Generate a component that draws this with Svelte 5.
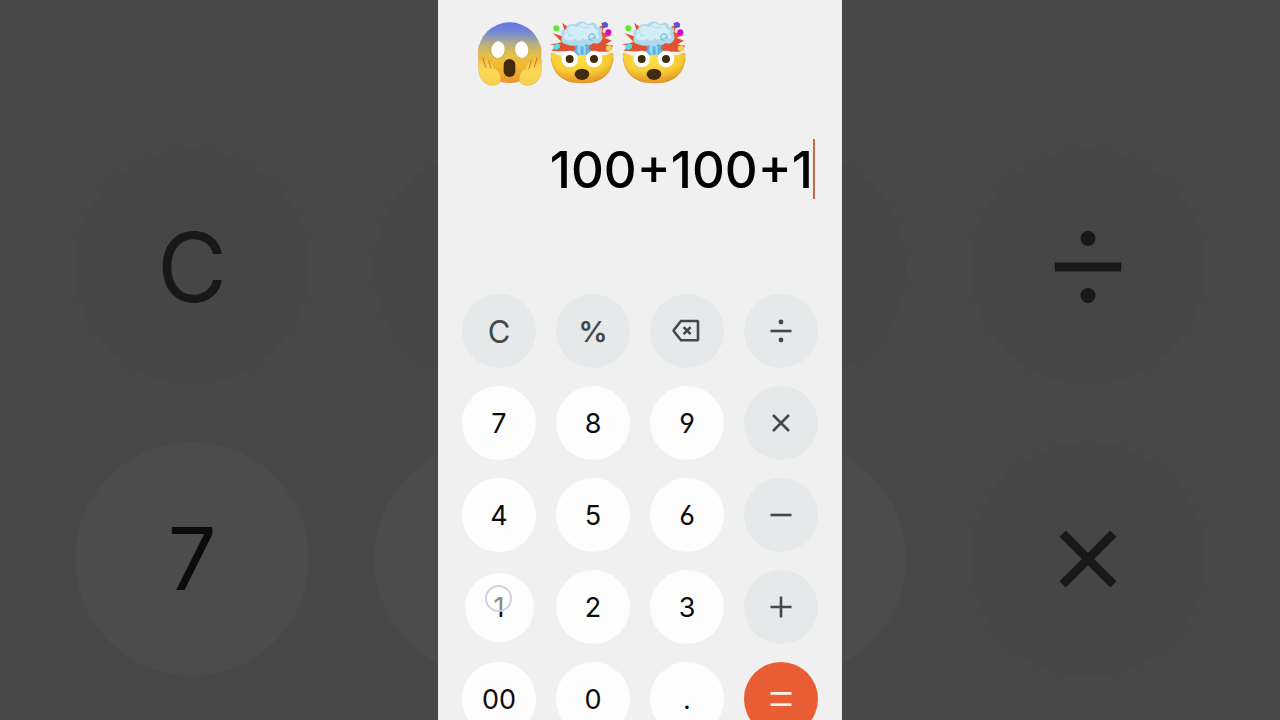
<script>
  // Calculator screen over an enlarged, dimmed copy of its own keypad
  let expression = '100+100+1';
  let pressed = '1';

  const keys = [
    { value: 'C', type: 'op', label: 'Clear' },
    { value: '%', type: 'op', label: 'Percent' },
    { value: 'back', type: 'op', icon: true, label: 'Backspace' },
    { value: '÷', type: 'op', icon: true, label: 'Divide' },
    { value: '7' },
    { value: '8' },
    { value: '9' },
    { value: '×', type: 'op', icon: true, label: 'Multiply' },
    { value: '4' },
    { value: '5' },
    { value: '6' },
    { value: '−', type: 'op', icon: true, label: 'Subtract' },
    { value: '1' },
    { value: '2' },
    { value: '3' },
    { value: '+', type: 'op', icon: true, label: 'Add' },
    { value: '00' },
    { value: '0' },
    { value: '.' },
    { value: '=', type: 'equals', icon: true, label: 'Equals' }
  ];

  // only the outer columns of the backdrop carry a symbol
  const backdropKeys = [
    { value: 'C', type: 'op' },
    { type: 'op' },
    { type: 'op' },
    { value: '÷', type: 'op', icon: true },
    { value: '7' },
    {},
    {},
    { value: '×', type: 'op', icon: true }
  ];

  // work through × ÷ % first, then add everything up
  function calculate(text) {
    const terms = text.replace(/−/g, '+-').split('+').filter(Boolean);
    const total = terms.reduce((sum, term) => {
      const parts = term.split(/([×÷%])/);
      let value = Number(parts[0]);
      for (let i = 1; i < parts.length; i += 2) {
        if (parts[i] === '%') value = value / 100;
        else if (parts[i] === '×') value = value * Number(parts[i + 1]);
        else value = value / Number(parts[i + 1]);
      }
      return sum + value;
    }, 0);
    return String(total);
  }

  function press(key) {
    pressed = key.value;
    if (key.value === 'C') expression = '';
    else if (key.value === 'back') expression = expression.slice(0, -1);
    else if (key.value === '=') expression = calculate(expression);
    else expression += key.value;
  }
</script>

{#snippet icon(name)}
  {#if name === 'back'}
    <svg class="icon wide" viewBox="0 0 30 24" aria-hidden="true">
      <path d="M9 2H25.2Q26 2 26 2.8V20.4Q26 21.2 25.2 21.2H9L1.9 12.2Q1.5 11.6 1.9 11Z" />
      <path d="M11.6 8.2L18.6 15.2M18.6 8.2L11.6 15.2" />
    </svg>
  {:else}
    <svg class="icon" viewBox="0 0 24 24" aria-hidden="true">
      {#if name === '÷'}
        <path d="M1.5 12H22.5" />
        <circle cx="12" cy="3" r="2.4" />
        <circle cx="12" cy="21" r="2.4" />
      {:else if name === '×'}
        <path d="M4 4L20 20M20 4L4 20" />
      {:else if name === '−'}
        <path d="M1.5 12H22.5" />
      {:else if name === '+'}
        <path d="M1.5 12H22.5M12 1.5V22.5" />
      {:else}
        <path d="M1.5 6.4H22.5M1.5 17.6H22.5" />
      {/if}
    </svg>
  {/if}
{/snippet}

{#snippet exploding()}
  <svg class="emoji" viewBox="3 9 216 216" role="img" aria-label="Exploding head">
    <path fill="#df5231" d="M46 109L19 107L37 92L15 89L50 81L24 55L56 65L58 45L52 24L78 42L150 42L180 27L172 52L202 60L178 68L201 77L181 88L205 92L190 110Z" />
    <path fill="#5fb2df" d="M87 88H135L132 101L145 111Q113 132 80 111L92 102Z" />
    <path fill="#9cd5ed" d="M98 89H107V121Q101 118 97 110ZM115 92H122V120L116 122Z" />
    <path fill="#add9ea" d="M61 87Q43 82 51 65Q40 42 63 42Q67 23 91 28Q108 10 130 27Q151 16 157 36Q177 34 169 54Q176 70 169 78Q161 91 145 84Q137 95 125 87Q108 101 96 90Q80 96 61 87Z" />
    <path fill="#d3edf6" d="M59 72Q49 63 62 58Q52 48 66 46Q69 30 87 33Q94 38 100 34Q109 16 126 31Q146 24 149 42Q166 43 159 57Q167 66 157 73Q151 59 139 66Q128 76 114 71Q99 82 91 72Q73 83 59 72Z" />
    <path class="swirl" d="M142 76Q129 76 132 63Q138 52 149 60Q154 68 146 70" />
    <path class="swirl faint" d="M68 47Q66 61 80 62M105 32Q115 43 131 36M92 77Q83 82 74 77" />
    <path fill="url(#bowl)" d="M17 116Q19 109 34 118Q44 126 56 120L76 111L92 120H131L144 110L163 117Q178 125 190 117Q202 110 206 116Q205 205 112 205Q19 205 17 116Z" />
    <path fill="none" stroke="#d98b22" stroke-width="3" stroke-opacity=".5" d="M18 130Q30 203 112 203Q195 203 204 130" />
    <circle cx="74" cy="132" r="25" fill="#fff" />
    <circle cx="147" cy="132" r="25" fill="#fff" />
    <circle cx="74" cy="132" r="12" fill="#422b0d" />
    <circle cx="147" cy="132" r="12" fill="#422b0d" />
    <ellipse cx="111" cy="178" rx="22" ry="17" fill="#422b0d" />
    <circle cx="34" cy="40" r="9" fill="#62e52c" />
    <path fill="#674dd6" d="M169 25L181 20L190 27L188 37L175 40Z" />
    <circle cx="190" cy="52" r="9" fill="#cf0ac4" />
    <path fill="#54dfe3" d="M25 92L37 84L45 89L44 99L34 105L25 101Z" />
    <path fill="#f5cf53" d="M184 93L196 91L202 98L200 107L188 109L182 103Z" />
  </svg>
{/snippet}

<div class="stage">
  <div class="backdrop" aria-hidden="true">
    {#each backdropKeys as key}
      <div class="key {key.type || 'digit'}">
        {#if key.icon}
          {@render icon(key.value)}
        {:else if key.value}
          <span>{key.value}</span>
        {/if}
      </div>
    {/each}
  </div>

  <main class="calculator">
    <div class="reactions">
      <svg class="emoji" viewBox="12 9 216 216" role="img" aria-label="Screaming face">
        <defs>
          <linearGradient id="scream" x1="0" y1="0" x2="0" y2="1">
            <stop offset="0" stop-color="#6074e4" />
            <stop offset=".16" stop-color="#7588d4" />
            <stop offset=".36" stop-color="#b5b084" />
            <stop offset=".54" stop-color="#e4c149" />
            <stop offset=".72" stop-color="#f3ba31" />
            <stop offset="1" stop-color="#ed922d" />
          </linearGradient>
          <linearGradient id="hand" x1="0" y1="0" x2="0" y2="1">
            <stop offset="0" stop-color="#f3ba3c" />
            <stop offset=".5" stop-color="#fbd957" />
            <stop offset="1" stop-color="#f6d04b" />
          </linearGradient>
          <radialGradient id="bowl" cx=".46" cy=".2" r=".7">
            <stop offset="0" stop-color="#fbe044" />
            <stop offset=".65" stop-color="#f9cd36" />
            <stop offset="1" stop-color="#e8a02c" />
          </radialGradient>
        </defs>
        <ellipse cx="119" cy="113" rx="94" ry="91" fill="url(#scream)" />
        <path fill="none" stroke="#d98b25" stroke-width="3" stroke-opacity=".55" d="M28 88Q19 125 35 157M210 88Q219 125 203 157" />
        <ellipse cx="83" cy="104" rx="24" ry="27" fill="#dba42f" opacity=".6" />
        <ellipse cx="155" cy="104" rx="24" ry="27" fill="#dba42f" opacity=".6" />
        <ellipse cx="84" cy="104" rx="20" ry="25" fill="#fff" transform="rotate(8 84 104)" />
        <ellipse cx="155" cy="104" rx="20" ry="25" fill="#fff" transform="rotate(-8 155 104)" />
        <rect x="101" y="132" width="35" height="54" rx="17" fill="#422b0d" />
        <g fill="url(#hand)" stroke="#e0a23a" stroke-width="1">
          <path d="M25 147Q24 127 31 128Q37 129 42 146Q36 124 43 124Q50 124 58 146Q55 133 62 136Q68 141 73 160Q86 166 91 181Q96 205 78 210Q57 215 42 202Q23 186 25 147Z" />
          <path d="M215 147Q216 127 209 128Q203 129 198 146Q204 124 197 124Q190 124 182 146Q185 133 178 136Q172 141 167 160Q154 166 149 181Q144 205 162 210Q183 215 198 202Q217 186 215 147Z" />
        </g>
        <path fill="none" stroke="#d07f2e" stroke-width="3" stroke-linecap="round" d="M39 128L47 157M56 137L63 160M201 128L193 157M184 137L177 160" />
      </svg>
      {@render exploding()}
      {@render exploding()}
    </div>

    <div class="display">
      <input type="text" aria-label="Expression" bind:value={expression} />
      <span class="caret"></span>
    </div>

    <div class="keypad">
      {#each keys as key}
        <button
          type="button"
          class="key {key.type || 'digit'}"
          class:letter={key.value === 'C'}
          class:percent={key.value === '%'}
          class:pressed={pressed === key.value}
          aria-label={key.label}
          on:click={() => press(key)}
        >
          {#if key.icon}
            {@render icon(key.value)}
          {:else}
            {key.value}
          {/if}
          {#if pressed === key.value}
            <span class="touch"></span>
          {/if}
        </button>
      {/each}
    </div>
  </main>
</div>

<style>
  :global(body) {
    margin: 0;
    background: #484848;
  }

  .stage {
    display: grid;
    height: 100vh;
    overflow: hidden;
    font-family: Inter, 'Liberation Sans', sans-serif;
    font-feature-settings: 'cv03', 'cv04';
  }

  /* backdrop and calculator share one cell */
  .backdrop,
  .calculator {
    grid-area: 1 / 1;
    box-sizing: border-box;
  }

  .backdrop {
    display: grid;
    grid-template-columns: repeat(4, 234px);
    justify-content: space-between;
    align-content: start;
    row-gap: 58px;
    padding: 150px 75px 0;
    background: #484848;
  }

  .calculator {
    width: 100%;
    max-width: 404px;
    margin: 0 auto;
    background: #f0f0f0;
    z-index: 1;
  }

  .reactions {
    display: flex;
    padding: 18px 36px 0;
  }

  .emoji {
    width: 72px;
    height: 72px;
  }

  .swirl {
    fill: none;
    stroke: #80bfdc;
    stroke-width: 4;
    stroke-linecap: round;
  }

  .swirl.faint {
    stroke: #b2dcec;
  }

  .display {
    display: flex;
    align-items: center;
    padding: 49px 27px 95px 24px;
  }

  .display input {
    flex: 1;
    min-width: 0;
    height: 60px;
    padding: 0;
    border: none;
    outline: none;
    background: none;
    color: #000;
    font: inherit;
    font-size: 51px;
    font-weight: 500;
    text-align: right;
  }

  .caret {
    width: 2px;
    height: 60px;
    background: #c4694a;
  }

  .keypad {
    display: grid;
    grid-template-columns: repeat(4, 74px);
    grid-auto-rows: 74px;
    justify-content: space-between;
    place-items: center;
    row-gap: 18px;
    padding: 0 24px 24px;
  }

  .key {
    position: relative;
    display: flex;
    align-items: center;
    justify-content: center;
    box-sizing: border-box;
    width: 74px;
    height: 74px;
    padding: 0;
    border: none;
    border-radius: 50%;
    background: #fdfdfd;
    color: #0c0c0c;
    font: inherit;
    font-size: 27px;
    cursor: pointer;
  }

  .key.op {
    background: #e5e9ea;
    color: #454849;
  }

  .key.equals {
    background: #e85d33;
    color: #fff3ec;
  }

  .key.letter {
    font-size: 31px;
  }

  .key.percent {
    font-size: 29px;
    font-weight: 600;
  }

  .key.pressed {
    width: 69px;
    height: 69px;
  }

  .icon {
    width: 24px;
    height: 24px;
    fill: none;
    stroke: currentColor;
    stroke-width: 2.6;
  }

  .icon.wide {
    width: 30px;
  }

  .icon circle {
    fill: currentColor;
    stroke: none;
  }

  .touch {
    position: absolute;
    top: 12px;
    left: 20px;
    box-sizing: border-box;
    width: 27px;
    height: 27px;
    border: 2px solid #d5d0e0;
    border-radius: 50%;
    background: rgba(255, 255, 255, 0.5);
  }

  .backdrop .key {
    width: 234px;
    height: 234px;
    background: #4c4c4c;
    font-size: 86px;
    cursor: default;
  }

  .backdrop .key.op {
    background: #464646;
    color: #161918;
    font-size: 96px;
  }

  .backdrop .icon {
    width: 76px;
    height: 76px;
    stroke-width: 2.8;
  }
</style>
